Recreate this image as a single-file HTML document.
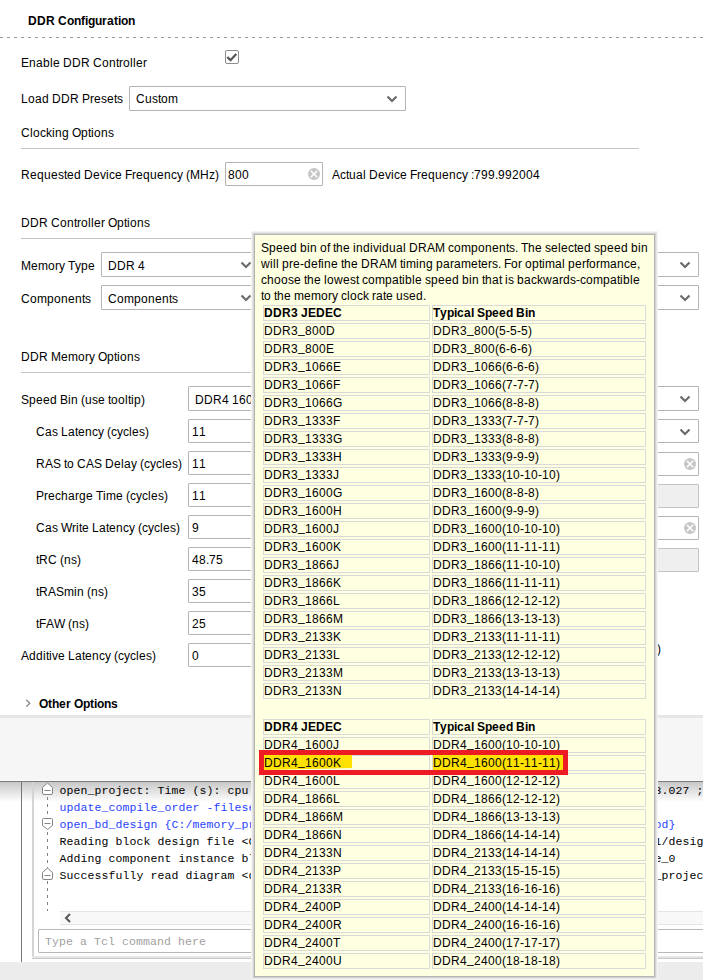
<!DOCTYPE html>
<html><head><meta charset="utf-8"><title>DDR Configuration</title><style>
html,body{margin:0;padding:0}
body{width:703px;height:980px;overflow:hidden;position:relative;background:#fff;font-family:"Liberation Sans",sans-serif;font-size:12px;color:#000;font-kerning:none;font-variant-ligatures:none}
.t{position:absolute;white-space:pre;line-height:14px;font-size:12px}
.t i{font-style:normal;display:inline-block}
.t .u{position:relative;top:-2px}
.w1{width:1px}.w2{width:2px}.w3{width:3px}.w4{width:4px}.w5{width:5px}.w6{width:6px}.w7{width:7px}.w8{width:8px}.w9{width:9px}.w10{width:10px}.w11{width:11px}.w12{width:12px}.w13{width:13px}.w14{width:14px}.w15{width:15px}
.m{position:absolute;white-space:pre;font-family:"Liberation Mono",monospace;font-size:11.5px;letter-spacing:0.1px;line-height:17px}
.bx{position:absolute;box-sizing:border-box;border:1px solid #b4b4b4;background:#fff;border-radius:1px}
.cell{position:absolute;box-sizing:border-box;border:1px solid #d9d9d9}
.hl{position:absolute;height:1px;background:#c4c4c4}
.chev{position:absolute;overflow:visible}
.cb{position:absolute;width:14px;height:14px;box-sizing:border-box;border:1px solid #8c8c8c;border-radius:2px;background:#fff}
#tip{position:absolute;left:254px;top:234px;width:401px;height:743px;box-sizing:border-box;background:#ffffe1;border:1px solid #b4b4b4;box-shadow:0 0 0 1px #d2d2d2,0 0 0 2px #e6e6e6,0 0 0 3px #f4f4f4}
.tt{position:absolute;white-space:pre;line-height:14px;font-size:12px;letter-spacing:0.1px}
</style></head>
<body>
<div class="t" style="left:28px;top:14px;font-weight:bold"><i class="w9">D</i><i class="w9">D</i><i class="w9">R</i><i class="w3"> </i><i class="w9">C</i><i class="w7">o</i><i class="w7">n</i><i class="w4">f</i><i class="w3">i</i><i class="w7">g</i><i class="w7">u</i><i class="w5">r</i><i class="w7">a</i><i class="w4">t</i><i class="w3">i</i><i class="w7">o</i><i class="w7">n</i></div>
<div style="position:absolute;left:0;top:37px;width:703px;height:1px;background:repeating-linear-gradient(90deg,#9a9a9a 0 3px,transparent 3px 7px)"></div>
<div class="t" style="left:21px;top:56px"><i class="w8">E</i><i class="w7">n</i><i class="w7">a</i><i class="w7">b</i><i class="w3">l</i><i class="w7">e</i><i class="w3"> </i><i class="w9">D</i><i class="w9">D</i><i class="w9">R</i><i class="w3"> </i><i class="w9">C</i><i class="w7">o</i><i class="w7">n</i><i class="w3">t</i><i class="w4">r</i><i class="w7">o</i><i class="w3">l</i><i class="w3">l</i><i class="w7">e</i><i class="w4">r</i></div>
<div class="cb" style="left:225px;top:50px"></div>
<svg class="chev" style="left:225px;top:50px" width="14" height="14" viewBox="0 0 14 14"><path d="M2.3 7 L5.5 10.2 L11.3 4" fill="none" stroke="#555" stroke-width="2.3"/></svg>
<div class="t" style="left:21px;top:92px"><i class="w7">L</i><i class="w7">o</i><i class="w7">a</i><i class="w7">d</i><i class="w3"> </i><i class="w9">D</i><i class="w9">D</i><i class="w9">R</i><i class="w3"> </i><i class="w8">P</i><i class="w4">r</i><i class="w7">e</i><i class="w6">s</i><i class="w7">e</i><i class="w3">t</i><i class="w6">s</i></div>
<div class="bx" style="left:129px;top:86px;width:277px;height:25px;"></div>
<div class="t" style="left:136px;top:92px"><i class="w9">C</i><i class="w7">u</i><i class="w6">s</i><i class="w3">t</i><i class="w7">o</i><i class="w10">m</i></div>
<svg class="chev" style="left:386px;top:95px" width="12" height="8" viewBox="0 0 12 8"><path d="M1.5 1.5 L6 6 L10.5 1.5" fill="none" stroke="#6b6b6b" stroke-width="2.2"/></svg>
<div class="t" style="left:21px;top:126px"><i class="w9">C</i><i class="w3">l</i><i class="w7">o</i><i class="w6">c</i><i class="w6">k</i><i class="w3">i</i><i class="w7">n</i><i class="w7">g</i><i class="w3"> </i><i class="w9">O</i><i class="w7">p</i><i class="w3">t</i><i class="w3">i</i><i class="w7">o</i><i class="w7">n</i><i class="w6">s</i></div>
<div class="hl" style="left:21px;top:148px;width:618px"></div>
<div class="t" style="left:21px;top:168px"><i class="w9">R</i><i class="w7">e</i><i class="w7">q</i><i class="w7">u</i><i class="w7">e</i><i class="w6">s</i><i class="w3">t</i><i class="w7">e</i><i class="w7">d</i><i class="w3"> </i><i class="w9">D</i><i class="w7">e</i><i class="w6">v</i><i class="w3">i</i><i class="w6">c</i><i class="w7">e</i><i class="w3"> </i><i class="w7">F</i><i class="w4">r</i><i class="w7">e</i><i class="w7">q</i><i class="w7">u</i><i class="w7">e</i><i class="w7">n</i><i class="w6">c</i><i class="w6">y</i><i class="w3"> </i><i class="w4">(</i><i class="w10">M</i><i class="w9">H</i><i class="w6">z</i><i class="w4">)</i></div>
<div class="bx" style="left:225px;top:162px;width:98px;height:24px;"></div>
<div class="t" style="left:228px;top:168px"><i class="w7">8</i><i class="w7">0</i><i class="w7">0</i></div>
<svg class="chev" style="left:308px;top:168px" width="12" height="12" viewBox="0 0 12 12"><circle cx="6" cy="6" r="6" fill="#c6c6c6"/><path d="M2.8 2.8 L9.2 9.2 M9.2 2.8 L2.8 9.2" stroke="#fff" stroke-width="1.5"/></svg>
<div class="t" style="left:332px;top:168px"><i class="w8">A</i><i class="w6">c</i><i class="w3">t</i><i class="w7">u</i><i class="w7">a</i><i class="w3">l</i><i class="w3"> </i><i class="w9">D</i><i class="w7">e</i><i class="w6">v</i><i class="w3">i</i><i class="w6">c</i><i class="w7">e</i><i class="w3"> </i><i class="w7">F</i><i class="w4">r</i><i class="w7">e</i><i class="w7">q</i><i class="w7">u</i><i class="w7">e</i><i class="w7">n</i><i class="w6">c</i><i class="w6">y</i><i class="w3"> </i><i class="w3">:</i><i class="w7">7</i><i class="w7">9</i><i class="w7">9</i><i class="w3">.</i><i class="w7">9</i><i class="w7">9</i><i class="w7">2</i><i class="w7">0</i><i class="w7">0</i><i class="w7">4</i></div>
<div class="t" style="left:21px;top:216px"><i class="w9">D</i><i class="w9">D</i><i class="w9">R</i><i class="w3"> </i><i class="w9">C</i><i class="w7">o</i><i class="w7">n</i><i class="w3">t</i><i class="w4">r</i><i class="w7">o</i><i class="w3">l</i><i class="w3">l</i><i class="w7">e</i><i class="w4">r</i><i class="w3"> </i><i class="w9">O</i><i class="w7">p</i><i class="w3">t</i><i class="w3">i</i><i class="w7">o</i><i class="w7">n</i><i class="w6">s</i></div>
<div class="hl" style="left:21px;top:238px;width:618px"></div>
<div class="t" style="left:21px;top:259px"><i class="w10">M</i><i class="w7">e</i><i class="w10">m</i><i class="w7">o</i><i class="w4">r</i><i class="w6">y</i><i class="w3"> </i><i class="w7">T</i><i class="w6">y</i><i class="w7">p</i><i class="w7">e</i></div>
<div class="bx" style="left:101px;top:252px;width:598px;height:25px;"></div>
<div class="t" style="left:108px;top:259px"><i class="w9">D</i><i class="w9">D</i><i class="w9">R</i><i class="w3"> </i><i class="w7">4</i></div>
<svg class="chev" style="left:679px;top:261px" width="12" height="8" viewBox="0 0 12 8"><path d="M1.5 1.5 L6 6 L10.5 1.5" fill="none" stroke="#6b6b6b" stroke-width="2.2"/></svg>
<svg class="chev" style="left:240px;top:261px" width="12" height="8" viewBox="0 0 12 8"><path d="M1.5 1.5 L6 6 L10.5 1.5" fill="none" stroke="#6b6b6b" stroke-width="2.2"/></svg>
<div class="t" style="left:21px;top:292px"><i class="w9">C</i><i class="w7">o</i><i class="w10">m</i><i class="w7">p</i><i class="w7">o</i><i class="w7">n</i><i class="w7">e</i><i class="w7">n</i><i class="w3">t</i><i class="w6">s</i></div>
<div class="bx" style="left:101px;top:285px;width:598px;height:25px;"></div>
<div class="t" style="left:108px;top:292px"><i class="w9">C</i><i class="w7">o</i><i class="w10">m</i><i class="w7">p</i><i class="w7">o</i><i class="w7">n</i><i class="w7">e</i><i class="w7">n</i><i class="w3">t</i><i class="w6">s</i></div>
<svg class="chev" style="left:679px;top:294px" width="12" height="8" viewBox="0 0 12 8"><path d="M1.5 1.5 L6 6 L10.5 1.5" fill="none" stroke="#6b6b6b" stroke-width="2.2"/></svg>
<svg class="chev" style="left:240px;top:294px" width="12" height="8" viewBox="0 0 12 8"><path d="M1.5 1.5 L6 6 L10.5 1.5" fill="none" stroke="#6b6b6b" stroke-width="2.2"/></svg>
<div class="t" style="left:21px;top:350px"><i class="w9">D</i><i class="w9">D</i><i class="w9">R</i><i class="w3"> </i><i class="w10">M</i><i class="w7">e</i><i class="w10">m</i><i class="w7">o</i><i class="w4">r</i><i class="w6">y</i><i class="w3"> </i><i class="w9">O</i><i class="w7">p</i><i class="w3">t</i><i class="w3">i</i><i class="w7">o</i><i class="w7">n</i><i class="w6">s</i></div>
<div class="hl" style="left:21px;top:372px;width:618px"></div>
<div class="t" style="left:21px;top:393px"><i class="w8">S</i><i class="w7">p</i><i class="w7">e</i><i class="w7">e</i><i class="w7">d</i><i class="w3"> </i><i class="w8">B</i><i class="w3">i</i><i class="w7">n</i><i class="w3"> </i><i class="w4">(</i><i class="w7">u</i><i class="w6">s</i><i class="w7">e</i><i class="w3"> </i><i class="w3">t</i><i class="w7">o</i><i class="w7">o</i><i class="w3">l</i><i class="w3">t</i><i class="w3">i</i><i class="w7">p</i><i class="w4">)</i></div>
<div class="bx" style="left:188px;top:386px;width:511px;height:25px;"></div>
<div class="t" style="left:195px;top:393px"><i class="w9">D</i><i class="w9">D</i><i class="w9">R</i><i class="w7">4</i><i class="w3"> </i><i class="w7">1</i><i class="w7">6</i><i class="w7">0</i><i class="w7">0</i><i class="w8">K</i></div>
<svg class="chev" style="left:679px;top:395px" width="12" height="8" viewBox="0 0 12 8"><path d="M1.5 1.5 L6 6 L10.5 1.5" fill="none" stroke="#6b6b6b" stroke-width="2.2"/></svg>
<div class="t" style="left:36px;top:425px"><i class="w9">C</i><i class="w7">a</i><i class="w6">s</i><i class="w3"> </i><i class="w7">L</i><i class="w7">a</i><i class="w3">t</i><i class="w7">e</i><i class="w7">n</i><i class="w6">c</i><i class="w6">y</i><i class="w3"> </i><i class="w4">(</i><i class="w6">c</i><i class="w6">y</i><i class="w6">c</i><i class="w3">l</i><i class="w7">e</i><i class="w6">s</i><i class="w4">)</i></div>
<div class="bx" style="left:188px;top:419px;width:511px;height:24px;"></div>
<div class="t" style="left:192px;top:425px"><i class="w7">1</i><i class="w7">1</i></div>
<svg class="chev" style="left:679px;top:428px" width="12" height="8" viewBox="0 0 12 8"><path d="M1.5 1.5 L6 6 L10.5 1.5" fill="none" stroke="#6b6b6b" stroke-width="2.2"/></svg>
<div class="t" style="left:36px;top:457px"><i class="w9">R</i><i class="w8">A</i><i class="w8">S</i><i class="w3"> </i><i class="w3">t</i><i class="w7">o</i><i class="w3"> </i><i class="w9">C</i><i class="w8">A</i><i class="w8">S</i><i class="w3"> </i><i class="w9">D</i><i class="w7">e</i><i class="w3">l</i><i class="w7">a</i><i class="w6">y</i><i class="w3"> </i><i class="w4">(</i><i class="w6">c</i><i class="w6">y</i><i class="w6">c</i><i class="w3">l</i><i class="w7">e</i><i class="w6">s</i><i class="w4">)</i></div>
<div class="bx" style="left:480px;top:452px;width:219px;height:24px;"></div>
<div class="bx" style="left:188px;top:451px;width:213px;height:24px;"></div>
<div class="t" style="left:192px;top:457px"><i class="w7">1</i><i class="w7">1</i></div>
<svg class="chev" style="left:684px;top:458px" width="12" height="12" viewBox="0 0 12 12"><circle cx="6" cy="6" r="6" fill="#c6c6c6"/><path d="M2.8 2.8 L9.2 9.2 M9.2 2.8 L2.8 9.2" stroke="#fff" stroke-width="1.5"/></svg>
<div class="t" style="left:36px;top:489px"><i class="w8">P</i><i class="w4">r</i><i class="w7">e</i><i class="w6">c</i><i class="w7">h</i><i class="w7">a</i><i class="w4">r</i><i class="w7">g</i><i class="w7">e</i><i class="w3"> </i><i class="w7">T</i><i class="w3">i</i><i class="w10">m</i><i class="w7">e</i><i class="w3"> </i><i class="w4">(</i><i class="w6">c</i><i class="w6">y</i><i class="w6">c</i><i class="w3">l</i><i class="w7">e</i><i class="w6">s</i><i class="w4">)</i></div>
<div class="bx" style="left:480px;top:484px;width:219px;height:24px;background:#efefef;border-color:#c4c4c4"></div>
<div class="bx" style="left:188px;top:483px;width:213px;height:24px;"></div>
<div class="t" style="left:192px;top:489px"><i class="w7">1</i><i class="w7">1</i></div>
<div class="t" style="left:36px;top:521px"><i class="w9">C</i><i class="w7">a</i><i class="w6">s</i><i class="w3"> </i><i class="w11">W</i><i class="w4">r</i><i class="w3">i</i><i class="w3">t</i><i class="w7">e</i><i class="w3"> </i><i class="w7">L</i><i class="w7">a</i><i class="w3">t</i><i class="w7">e</i><i class="w7">n</i><i class="w6">c</i><i class="w6">y</i><i class="w3"> </i><i class="w4">(</i><i class="w6">c</i><i class="w6">y</i><i class="w6">c</i><i class="w3">l</i><i class="w7">e</i><i class="w6">s</i><i class="w4">)</i></div>
<div class="bx" style="left:480px;top:516px;width:219px;height:24px;"></div>
<div class="bx" style="left:188px;top:515px;width:213px;height:24px;"></div>
<div class="t" style="left:192px;top:521px"><i class="w7">9</i></div>
<svg class="chev" style="left:684px;top:522px" width="12" height="12" viewBox="0 0 12 12"><circle cx="6" cy="6" r="6" fill="#c6c6c6"/><path d="M2.8 2.8 L9.2 9.2 M9.2 2.8 L2.8 9.2" stroke="#fff" stroke-width="1.5"/></svg>
<div class="t" style="left:36px;top:553px"><i class="w3">t</i><i class="w9">R</i><i class="w9">C</i><i class="w3"> </i><i class="w4">(</i><i class="w7">n</i><i class="w6">s</i><i class="w4">)</i></div>
<div class="bx" style="left:480px;top:548px;width:219px;height:24px;background:#efefef;border-color:#c4c4c4"></div>
<div class="bx" style="left:188px;top:547px;width:213px;height:24px;"></div>
<div class="t" style="left:192px;top:553px"><i class="w7">4</i><i class="w7">8</i><i class="w3">.</i><i class="w7">7</i><i class="w7">5</i></div>
<div class="t" style="left:36px;top:585px"><i class="w3">t</i><i class="w9">R</i><i class="w8">A</i><i class="w8">S</i><i class="w10">m</i><i class="w3">i</i><i class="w7">n</i><i class="w3"> </i><i class="w4">(</i><i class="w7">n</i><i class="w6">s</i><i class="w4">)</i></div>
<div class="bx" style="left:188px;top:579px;width:453px;height:24px;"></div>
<div class="t" style="left:192px;top:585px"><i class="w7">3</i><i class="w7">5</i></div>
<div class="t" style="left:36px;top:617px"><i class="w3">t</i><i class="w7">F</i><i class="w8">A</i><i class="w11">W</i><i class="w3"> </i><i class="w4">(</i><i class="w7">n</i><i class="w6">s</i><i class="w4">)</i></div>
<div class="bx" style="left:188px;top:611px;width:453px;height:24px;"></div>
<div class="t" style="left:192px;top:617px"><i class="w7">2</i><i class="w7">5</i></div>
<div class="t" style="left:21px;top:649px"><i class="w8">A</i><i class="w7">d</i><i class="w7">d</i><i class="w3">i</i><i class="w3">t</i><i class="w3">i</i><i class="w6">v</i><i class="w7">e</i><i class="w3"> </i><i class="w7">L</i><i class="w7">a</i><i class="w3">t</i><i class="w7">e</i><i class="w7">n</i><i class="w6">c</i><i class="w6">y</i><i class="w3"> </i><i class="w4">(</i><i class="w6">c</i><i class="w6">y</i><i class="w6">c</i><i class="w3">l</i><i class="w7">e</i><i class="w6">s</i><i class="w4">)</i></div>
<div class="bx" style="left:188px;top:643px;width:453px;height:24px;"></div>
<div class="t" style="left:192px;top:649px"><i class="w7">0</i></div>
<div class="t" style="left:657px;top:642px"><i class="w4">)</i></div>
<svg class="chev" style="left:24px;top:698px" width="8" height="12" viewBox="0 0 8 12"><path d="M2.3 1.8 L5.8 5.3 L2.3 8.8" fill="none" stroke="#8a8a8a" stroke-width="1.3"/></svg>
<div class="t" style="left:39px;top:697px;font-weight:bold"><i class="w9">O</i><i class="w4">t</i><i class="w7">h</i><i class="w7">e</i><i class="w5">r</i><i class="w3"> </i><i class="w9">O</i><i class="w7">p</i><i class="w4">t</i><i class="w3">i</i><i class="w7">o</i><i class="w7">n</i><i class="w7">s</i></div>
<div style="position:absolute;left:0;top:715px;width:703px;height:65px;background:#f6f6f6;border-top:3px solid #e6e6e6;box-sizing:border-box"></div>
<div style="position:absolute;left:0;top:780px;width:703px;height:1px;background:#fbfbfb"></div>
<div style="position:absolute;left:0;top:781px;width:703px;height:1px;background:#7a7a7a"></div>
<div style="position:absolute;left:0;top:782px;width:703px;height:180px;background:#fff"></div>
<div style="position:absolute;left:0;top:782px;width:703px;height:20px;background:linear-gradient(#c8c8c8,rgba(255,255,255,0))"></div>
<div style="position:absolute;left:21px;top:782px;width:1px;height:180px;background:#777"></div>
<div style="position:absolute;left:32px;top:782px;width:2px;height:176px;background:#d4d4d4"></div>
<div style="position:absolute;left:32px;top:956px;width:671px;height:2px;background:#e6e6e6"></div>
<div style="position:absolute;left:32px;top:958px;width:671px;height:1px;background:#c8c8c8"></div>
<div style="position:absolute;left:60px;top:911px;width:643px;height:14px;background:#f8f8f8;border-top:1px solid #e4e4e4;border-bottom:1px solid #e4e4e4;box-sizing:border-box"></div>
<svg class="chev" style="left:63px;top:912px" width="10" height="12" viewBox="0 0 10 12"><path d="M7 2 L3 6 L7 10" fill="none" stroke="#555" stroke-width="2"/></svg>
<div class="bx" style="left:38px;top:929px;width:666px;height:24px;border-color:#b8b8b8"></div>
<div class="m" style="left:45px;top:933px;color:#a0a0a0">Type a Tcl command here</div>
<div style="position:absolute;left:0;top:962px;width:703px;height:18px;background:#ececec"></div>
<div class="m" style="left:59.5px;top:782px;color:#000">open_project: Time (s): cpu = 00:00:14 ; elapsed = 00:00:07 . Memory (MB): peak = 1003.027 ; gain = 230.832</div>
<div class="m" style="left:59.5px;top:799px;color:#1f3fff">update_compile_order -fileset sources_1</div>
<div class="m" style="left:59.5px;top:816px;color:#1f3fff">open_bd_design {C:/memory_project/memory_project.srcs/sources_1/bd/design_1/design_1.bd}</div>
<div class="m" style="left:59.5px;top:833px;color:#000">Reading block design file &lt;C:/memory_project/memory_project.srcs/sources_1/bd/design_1/design_1.bd&gt;...</div>
<div class="m" style="left:59.5px;top:850px;color:#000">Adding component instance block -- xilinx.com:ip:zynq_ultra_ps_e:3.3 - zynq_ultra_ps_e_0</div>
<div class="m" style="left:59.5px;top:867px;color:#000">Successfully read diagram &lt;design_1&gt; from BD file &lt;C:/Users/admin/Desktop/test/memory_project/memory_project.srcs/sources_1/bd/design_1/design_1.bd&gt;</div>
<div style="position:absolute;left:47px;top:797px;width:1px;height:114px;background:repeating-linear-gradient(180deg,#808080 0 3px,transparent 3px 7px)"></div>
<svg class="chev" style="left:41px;top:782px" width="13" height="14" viewBox="0 0 13 14"><path d="M1.5 5.5 L6.5 1 L11.5 5.5 L11.5 11 Q11.5 12.5 10 12.5 L3 12.5 Q1.5 12.5 1.5 11 Z" fill="#fff" stroke="#858585" stroke-width="1"/><path d="M3.5 8.5 H9.5" stroke="#858585" stroke-width="1"/></svg>
<svg class="chev" style="left:41px;top:817px" width="13" height="14" viewBox="0 0 13 14"><path d="M1.5 2.5 Q1.5 1.5 2.5 1.5 L10.5 1.5 Q11.5 1.5 11.5 2.5 L11.5 8.5 L6.5 12.5 L1.5 8.5 Z" fill="#fff" stroke="#858585" stroke-width="1"/><path d="M3.5 6.5 H9.5" stroke="#858585" stroke-width="1"/></svg>
<svg class="chev" style="left:41px;top:867px" width="13" height="14" viewBox="0 0 13 14"><path d="M1.5 5.5 L6.5 1 L11.5 5.5 L11.5 11 Q11.5 12.5 10 12.5 L3 12.5 Q1.5 12.5 1.5 11 Z" fill="#fff" stroke="#858585" stroke-width="1"/><path d="M3.5 8.5 H9.5" stroke="#858585" stroke-width="1"/></svg>
<div id="tip"></div>
<div class="t" style="left:261px;top:241px"><i class="w8">S</i><i class="w7">p</i><i class="w7">e</i><i class="w7">e</i><i class="w7">d</i><i class="w3"> </i><i class="w7">b</i><i class="w3">i</i><i class="w7">n</i><i class="w3"> </i><i class="w7">o</i><i class="w3">f</i><i class="w3"> </i><i class="w3">t</i><i class="w7">h</i><i class="w7">e</i><i class="w3"> </i><i class="w3">i</i><i class="w7">n</i><i class="w7">d</i><i class="w3">i</i><i class="w6">v</i><i class="w3">i</i><i class="w7">d</i><i class="w7">u</i><i class="w7">a</i><i class="w3">l</i><i class="w3"> </i><i class="w9">D</i><i class="w9">R</i><i class="w8">A</i><i class="w10">M</i><i class="w3"> </i><i class="w6">c</i><i class="w7">o</i><i class="w10">m</i><i class="w7">p</i><i class="w7">o</i><i class="w7">n</i><i class="w7">e</i><i class="w7">n</i><i class="w3">t</i><i class="w6">s</i><i class="w3">.</i><i class="w3"> </i><i class="w7">T</i><i class="w7">h</i><i class="w7">e</i><i class="w3"> </i><i class="w6">s</i><i class="w7">e</i><i class="w3">l</i><i class="w7">e</i><i class="w6">c</i><i class="w3">t</i><i class="w7">e</i><i class="w7">d</i><i class="w3"> </i><i class="w6">s</i><i class="w7">p</i><i class="w7">e</i><i class="w7">e</i><i class="w7">d</i><i class="w3"> </i><i class="w7">b</i><i class="w3">i</i><i class="w7">n</i></div>
<div class="t" style="left:261px;top:257px"><i class="w9">w</i><i class="w3">i</i><i class="w3">l</i><i class="w3">l</i><i class="w3"> </i><i class="w7">p</i><i class="w4">r</i><i class="w7">e</i><i class="w4">-</i><i class="w7">d</i><i class="w7">e</i><i class="w3">f</i><i class="w3">i</i><i class="w7">n</i><i class="w7">e</i><i class="w3"> </i><i class="w3">t</i><i class="w7">h</i><i class="w7">e</i><i class="w3"> </i><i class="w9">D</i><i class="w9">R</i><i class="w8">A</i><i class="w10">M</i><i class="w3"> </i><i class="w3">t</i><i class="w3">i</i><i class="w10">m</i><i class="w3">i</i><i class="w7">n</i><i class="w7">g</i><i class="w3"> </i><i class="w7">p</i><i class="w7">a</i><i class="w4">r</i><i class="w7">a</i><i class="w10">m</i><i class="w7">e</i><i class="w3">t</i><i class="w7">e</i><i class="w4">r</i><i class="w6">s</i><i class="w3">.</i><i class="w3"> </i><i class="w7">F</i><i class="w7">o</i><i class="w4">r</i><i class="w3"> </i><i class="w7">o</i><i class="w7">p</i><i class="w3">t</i><i class="w3">i</i><i class="w10">m</i><i class="w7">a</i><i class="w3">l</i><i class="w3"> </i><i class="w7">p</i><i class="w7">e</i><i class="w4">r</i><i class="w3">f</i><i class="w7">o</i><i class="w4">r</i><i class="w10">m</i><i class="w7">a</i><i class="w7">n</i><i class="w6">c</i><i class="w7">e</i><i class="w3">,</i></div>
<div class="t" style="left:261px;top:273px"><i class="w6">c</i><i class="w7">h</i><i class="w7">o</i><i class="w7">o</i><i class="w6">s</i><i class="w7">e</i><i class="w3"> </i><i class="w3">t</i><i class="w7">h</i><i class="w7">e</i><i class="w3"> </i><i class="w3">l</i><i class="w7">o</i><i class="w9">w</i><i class="w7">e</i><i class="w6">s</i><i class="w3">t</i><i class="w3"> </i><i class="w6">c</i><i class="w7">o</i><i class="w10">m</i><i class="w7">p</i><i class="w7">a</i><i class="w3">t</i><i class="w3">i</i><i class="w7">b</i><i class="w3">l</i><i class="w7">e</i><i class="w3"> </i><i class="w6">s</i><i class="w7">p</i><i class="w7">e</i><i class="w7">e</i><i class="w7">d</i><i class="w3"> </i><i class="w7">b</i><i class="w3">i</i><i class="w7">n</i><i class="w3"> </i><i class="w3">t</i><i class="w7">h</i><i class="w7">a</i><i class="w3">t</i><i class="w3"> </i><i class="w3">i</i><i class="w6">s</i><i class="w3"> </i><i class="w7">b</i><i class="w7">a</i><i class="w6">c</i><i class="w6">k</i><i class="w9">w</i><i class="w7">a</i><i class="w4">r</i><i class="w7">d</i><i class="w6">s</i><i class="w4">-</i><i class="w6">c</i><i class="w7">o</i><i class="w10">m</i><i class="w7">p</i><i class="w7">a</i><i class="w3">t</i><i class="w3">i</i><i class="w7">b</i><i class="w3">l</i><i class="w7">e</i></div>
<div class="t" style="left:261px;top:289px"><i class="w3">t</i><i class="w7">o</i><i class="w3"> </i><i class="w3">t</i><i class="w7">h</i><i class="w7">e</i><i class="w3"> </i><i class="w10">m</i><i class="w7">e</i><i class="w10">m</i><i class="w7">o</i><i class="w4">r</i><i class="w6">y</i><i class="w3"> </i><i class="w6">c</i><i class="w3">l</i><i class="w7">o</i><i class="w6">c</i><i class="w6">k</i><i class="w3"> </i><i class="w4">r</i><i class="w7">a</i><i class="w3">t</i><i class="w7">e</i><i class="w3"> </i><i class="w7">u</i><i class="w6">s</i><i class="w7">e</i><i class="w7">d</i><i class="w3">.</i></div>
<div class="cell" style="left:263px;top:305px;width:167px;height:16px;"></div>
<div class="cell" style="left:432px;top:305px;width:214px;height:16px;"></div>
<div class="t" style="left:264px;top:306px;font-weight:bold"><i class="w9">D</i><i class="w9">D</i><i class="w9">R</i><i class="w7">3</i><i class="w3"> </i><i class="w7">J</i><i class="w8">E</i><i class="w9">D</i><i class="w8">E</i><i class="w9">C</i></div>
<div class="t" style="left:433px;top:306px;font-weight:bold"><i class="w7">T</i><i class="w7">y</i><i class="w7">p</i><i class="w3">i</i><i class="w7">c</i><i class="w7">a</i><i class="w3">l</i><i class="w3"> </i><i class="w8">S</i><i class="w7">p</i><i class="w7">e</i><i class="w7">e</i><i class="w7">d</i><i class="w3"> </i><i class="w9">B</i><i class="w3">i</i><i class="w7">n</i></div>
<div class="cell" style="left:263px;top:323px;width:167px;height:16px;"></div>
<div class="cell" style="left:432px;top:323px;width:214px;height:16px;"></div>
<div class="t" style="left:264px;top:324px"><i class="w9">D</i><i class="w9">D</i><i class="w9">R</i><i class="w7">3</i><i class="w7 u">_</i><i class="w7">8</i><i class="w7">0</i><i class="w7">0</i><i class="w9">D</i></div>
<div class="t" style="left:433px;top:324px"><i class="w9">D</i><i class="w9">D</i><i class="w9">R</i><i class="w7">3</i><i class="w7 u">_</i><i class="w7">8</i><i class="w7">0</i><i class="w7">0</i><i class="w4">(</i><i class="w7">5</i><i class="w4">-</i><i class="w7">5</i><i class="w4">-</i><i class="w7">5</i><i class="w4">)</i></div>
<div class="cell" style="left:263px;top:341px;width:167px;height:16px;"></div>
<div class="cell" style="left:432px;top:341px;width:214px;height:16px;"></div>
<div class="t" style="left:264px;top:342px"><i class="w9">D</i><i class="w9">D</i><i class="w9">R</i><i class="w7">3</i><i class="w7 u">_</i><i class="w7">8</i><i class="w7">0</i><i class="w7">0</i><i class="w8">E</i></div>
<div class="t" style="left:433px;top:342px"><i class="w9">D</i><i class="w9">D</i><i class="w9">R</i><i class="w7">3</i><i class="w7 u">_</i><i class="w7">8</i><i class="w7">0</i><i class="w7">0</i><i class="w4">(</i><i class="w7">6</i><i class="w4">-</i><i class="w7">6</i><i class="w4">-</i><i class="w7">6</i><i class="w4">)</i></div>
<div class="cell" style="left:263px;top:359px;width:167px;height:16px;"></div>
<div class="cell" style="left:432px;top:359px;width:214px;height:16px;"></div>
<div class="t" style="left:264px;top:360px"><i class="w9">D</i><i class="w9">D</i><i class="w9">R</i><i class="w7">3</i><i class="w7 u">_</i><i class="w7">1</i><i class="w7">0</i><i class="w7">6</i><i class="w7">6</i><i class="w8">E</i></div>
<div class="t" style="left:433px;top:360px"><i class="w9">D</i><i class="w9">D</i><i class="w9">R</i><i class="w7">3</i><i class="w7 u">_</i><i class="w7">1</i><i class="w7">0</i><i class="w7">6</i><i class="w7">6</i><i class="w4">(</i><i class="w7">6</i><i class="w4">-</i><i class="w7">6</i><i class="w4">-</i><i class="w7">6</i><i class="w4">)</i></div>
<div class="cell" style="left:263px;top:377px;width:167px;height:16px;"></div>
<div class="cell" style="left:432px;top:377px;width:214px;height:16px;"></div>
<div class="t" style="left:264px;top:378px"><i class="w9">D</i><i class="w9">D</i><i class="w9">R</i><i class="w7">3</i><i class="w7 u">_</i><i class="w7">1</i><i class="w7">0</i><i class="w7">6</i><i class="w7">6</i><i class="w7">F</i></div>
<div class="t" style="left:433px;top:378px"><i class="w9">D</i><i class="w9">D</i><i class="w9">R</i><i class="w7">3</i><i class="w7 u">_</i><i class="w7">1</i><i class="w7">0</i><i class="w7">6</i><i class="w7">6</i><i class="w4">(</i><i class="w7">7</i><i class="w4">-</i><i class="w7">7</i><i class="w4">-</i><i class="w7">7</i><i class="w4">)</i></div>
<div class="cell" style="left:263px;top:395px;width:167px;height:16px;"></div>
<div class="cell" style="left:432px;top:395px;width:214px;height:16px;"></div>
<div class="t" style="left:264px;top:396px"><i class="w9">D</i><i class="w9">D</i><i class="w9">R</i><i class="w7">3</i><i class="w7 u">_</i><i class="w7">1</i><i class="w7">0</i><i class="w7">6</i><i class="w7">6</i><i class="w9">G</i></div>
<div class="t" style="left:433px;top:396px"><i class="w9">D</i><i class="w9">D</i><i class="w9">R</i><i class="w7">3</i><i class="w7 u">_</i><i class="w7">1</i><i class="w7">0</i><i class="w7">6</i><i class="w7">6</i><i class="w4">(</i><i class="w7">8</i><i class="w4">-</i><i class="w7">8</i><i class="w4">-</i><i class="w7">8</i><i class="w4">)</i></div>
<div class="cell" style="left:263px;top:413px;width:167px;height:16px;"></div>
<div class="cell" style="left:432px;top:413px;width:214px;height:16px;"></div>
<div class="t" style="left:264px;top:414px"><i class="w9">D</i><i class="w9">D</i><i class="w9">R</i><i class="w7">3</i><i class="w7 u">_</i><i class="w7">1</i><i class="w7">3</i><i class="w7">3</i><i class="w7">3</i><i class="w7">F</i></div>
<div class="t" style="left:433px;top:414px"><i class="w9">D</i><i class="w9">D</i><i class="w9">R</i><i class="w7">3</i><i class="w7 u">_</i><i class="w7">1</i><i class="w7">3</i><i class="w7">3</i><i class="w7">3</i><i class="w4">(</i><i class="w7">7</i><i class="w4">-</i><i class="w7">7</i><i class="w4">-</i><i class="w7">7</i><i class="w4">)</i></div>
<div class="cell" style="left:263px;top:431px;width:167px;height:16px;"></div>
<div class="cell" style="left:432px;top:431px;width:214px;height:16px;"></div>
<div class="t" style="left:264px;top:432px"><i class="w9">D</i><i class="w9">D</i><i class="w9">R</i><i class="w7">3</i><i class="w7 u">_</i><i class="w7">1</i><i class="w7">3</i><i class="w7">3</i><i class="w7">3</i><i class="w9">G</i></div>
<div class="t" style="left:433px;top:432px"><i class="w9">D</i><i class="w9">D</i><i class="w9">R</i><i class="w7">3</i><i class="w7 u">_</i><i class="w7">1</i><i class="w7">3</i><i class="w7">3</i><i class="w7">3</i><i class="w4">(</i><i class="w7">8</i><i class="w4">-</i><i class="w7">8</i><i class="w4">-</i><i class="w7">8</i><i class="w4">)</i></div>
<div class="cell" style="left:263px;top:449px;width:167px;height:16px;"></div>
<div class="cell" style="left:432px;top:449px;width:214px;height:16px;"></div>
<div class="t" style="left:264px;top:450px"><i class="w9">D</i><i class="w9">D</i><i class="w9">R</i><i class="w7">3</i><i class="w7 u">_</i><i class="w7">1</i><i class="w7">3</i><i class="w7">3</i><i class="w7">3</i><i class="w9">H</i></div>
<div class="t" style="left:433px;top:450px"><i class="w9">D</i><i class="w9">D</i><i class="w9">R</i><i class="w7">3</i><i class="w7 u">_</i><i class="w7">1</i><i class="w7">3</i><i class="w7">3</i><i class="w7">3</i><i class="w4">(</i><i class="w7">9</i><i class="w4">-</i><i class="w7">9</i><i class="w4">-</i><i class="w7">9</i><i class="w4">)</i></div>
<div class="cell" style="left:263px;top:467px;width:167px;height:16px;"></div>
<div class="cell" style="left:432px;top:467px;width:214px;height:16px;"></div>
<div class="t" style="left:264px;top:468px"><i class="w9">D</i><i class="w9">D</i><i class="w9">R</i><i class="w7">3</i><i class="w7 u">_</i><i class="w7">1</i><i class="w7">3</i><i class="w7">3</i><i class="w7">3</i><i class="w6">J</i></div>
<div class="t" style="left:433px;top:468px"><i class="w9">D</i><i class="w9">D</i><i class="w9">R</i><i class="w7">3</i><i class="w7 u">_</i><i class="w7">1</i><i class="w7">3</i><i class="w7">3</i><i class="w7">3</i><i class="w4">(</i><i class="w7">1</i><i class="w7">0</i><i class="w4">-</i><i class="w7">1</i><i class="w7">0</i><i class="w4">-</i><i class="w7">1</i><i class="w7">0</i><i class="w4">)</i></div>
<div class="cell" style="left:263px;top:485px;width:167px;height:16px;"></div>
<div class="cell" style="left:432px;top:485px;width:214px;height:16px;"></div>
<div class="t" style="left:264px;top:486px"><i class="w9">D</i><i class="w9">D</i><i class="w9">R</i><i class="w7">3</i><i class="w7 u">_</i><i class="w7">1</i><i class="w7">6</i><i class="w7">0</i><i class="w7">0</i><i class="w9">G</i></div>
<div class="t" style="left:433px;top:486px"><i class="w9">D</i><i class="w9">D</i><i class="w9">R</i><i class="w7">3</i><i class="w7 u">_</i><i class="w7">1</i><i class="w7">6</i><i class="w7">0</i><i class="w7">0</i><i class="w4">(</i><i class="w7">8</i><i class="w4">-</i><i class="w7">8</i><i class="w4">-</i><i class="w7">8</i><i class="w4">)</i></div>
<div class="cell" style="left:263px;top:503px;width:167px;height:16px;"></div>
<div class="cell" style="left:432px;top:503px;width:214px;height:16px;"></div>
<div class="t" style="left:264px;top:504px"><i class="w9">D</i><i class="w9">D</i><i class="w9">R</i><i class="w7">3</i><i class="w7 u">_</i><i class="w7">1</i><i class="w7">6</i><i class="w7">0</i><i class="w7">0</i><i class="w9">H</i></div>
<div class="t" style="left:433px;top:504px"><i class="w9">D</i><i class="w9">D</i><i class="w9">R</i><i class="w7">3</i><i class="w7 u">_</i><i class="w7">1</i><i class="w7">6</i><i class="w7">0</i><i class="w7">0</i><i class="w4">(</i><i class="w7">9</i><i class="w4">-</i><i class="w7">9</i><i class="w4">-</i><i class="w7">9</i><i class="w4">)</i></div>
<div class="cell" style="left:263px;top:521px;width:167px;height:16px;"></div>
<div class="cell" style="left:432px;top:521px;width:214px;height:16px;"></div>
<div class="t" style="left:264px;top:522px"><i class="w9">D</i><i class="w9">D</i><i class="w9">R</i><i class="w7">3</i><i class="w7 u">_</i><i class="w7">1</i><i class="w7">6</i><i class="w7">0</i><i class="w7">0</i><i class="w6">J</i></div>
<div class="t" style="left:433px;top:522px"><i class="w9">D</i><i class="w9">D</i><i class="w9">R</i><i class="w7">3</i><i class="w7 u">_</i><i class="w7">1</i><i class="w7">6</i><i class="w7">0</i><i class="w7">0</i><i class="w4">(</i><i class="w7">1</i><i class="w7">0</i><i class="w4">-</i><i class="w7">1</i><i class="w7">0</i><i class="w4">-</i><i class="w7">1</i><i class="w7">0</i><i class="w4">)</i></div>
<div class="cell" style="left:263px;top:539px;width:167px;height:16px;"></div>
<div class="cell" style="left:432px;top:539px;width:214px;height:16px;"></div>
<div class="t" style="left:264px;top:540px"><i class="w9">D</i><i class="w9">D</i><i class="w9">R</i><i class="w7">3</i><i class="w7 u">_</i><i class="w7">1</i><i class="w7">6</i><i class="w7">0</i><i class="w7">0</i><i class="w8">K</i></div>
<div class="t" style="left:433px;top:540px"><i class="w9">D</i><i class="w9">D</i><i class="w9">R</i><i class="w7">3</i><i class="w7 u">_</i><i class="w7">1</i><i class="w7">6</i><i class="w7">0</i><i class="w7">0</i><i class="w4">(</i><i class="w7">1</i><i class="w7">1</i><i class="w4">-</i><i class="w7">1</i><i class="w7">1</i><i class="w4">-</i><i class="w7">1</i><i class="w7">1</i><i class="w4">)</i></div>
<div class="cell" style="left:263px;top:557px;width:167px;height:16px;"></div>
<div class="cell" style="left:432px;top:557px;width:214px;height:16px;"></div>
<div class="t" style="left:264px;top:558px"><i class="w9">D</i><i class="w9">D</i><i class="w9">R</i><i class="w7">3</i><i class="w7 u">_</i><i class="w7">1</i><i class="w7">8</i><i class="w7">6</i><i class="w7">6</i><i class="w6">J</i></div>
<div class="t" style="left:433px;top:558px"><i class="w9">D</i><i class="w9">D</i><i class="w9">R</i><i class="w7">3</i><i class="w7 u">_</i><i class="w7">1</i><i class="w7">8</i><i class="w7">6</i><i class="w7">6</i><i class="w4">(</i><i class="w7">1</i><i class="w7">1</i><i class="w4">-</i><i class="w7">1</i><i class="w7">0</i><i class="w4">-</i><i class="w7">1</i><i class="w7">0</i><i class="w4">)</i></div>
<div class="cell" style="left:263px;top:575px;width:167px;height:16px;"></div>
<div class="cell" style="left:432px;top:575px;width:214px;height:16px;"></div>
<div class="t" style="left:264px;top:576px"><i class="w9">D</i><i class="w9">D</i><i class="w9">R</i><i class="w7">3</i><i class="w7 u">_</i><i class="w7">1</i><i class="w7">8</i><i class="w7">6</i><i class="w7">6</i><i class="w8">K</i></div>
<div class="t" style="left:433px;top:576px"><i class="w9">D</i><i class="w9">D</i><i class="w9">R</i><i class="w7">3</i><i class="w7 u">_</i><i class="w7">1</i><i class="w7">8</i><i class="w7">6</i><i class="w7">6</i><i class="w4">(</i><i class="w7">1</i><i class="w7">1</i><i class="w4">-</i><i class="w7">1</i><i class="w7">1</i><i class="w4">-</i><i class="w7">1</i><i class="w7">1</i><i class="w4">)</i></div>
<div class="cell" style="left:263px;top:593px;width:167px;height:16px;"></div>
<div class="cell" style="left:432px;top:593px;width:214px;height:16px;"></div>
<div class="t" style="left:264px;top:594px"><i class="w9">D</i><i class="w9">D</i><i class="w9">R</i><i class="w7">3</i><i class="w7 u">_</i><i class="w7">1</i><i class="w7">8</i><i class="w7">6</i><i class="w7">6</i><i class="w7">L</i></div>
<div class="t" style="left:433px;top:594px"><i class="w9">D</i><i class="w9">D</i><i class="w9">R</i><i class="w7">3</i><i class="w7 u">_</i><i class="w7">1</i><i class="w7">8</i><i class="w7">6</i><i class="w7">6</i><i class="w4">(</i><i class="w7">1</i><i class="w7">2</i><i class="w4">-</i><i class="w7">1</i><i class="w7">2</i><i class="w4">-</i><i class="w7">1</i><i class="w7">2</i><i class="w4">)</i></div>
<div class="cell" style="left:263px;top:611px;width:167px;height:16px;"></div>
<div class="cell" style="left:432px;top:611px;width:214px;height:16px;"></div>
<div class="t" style="left:264px;top:612px"><i class="w9">D</i><i class="w9">D</i><i class="w9">R</i><i class="w7">3</i><i class="w7 u">_</i><i class="w7">1</i><i class="w7">8</i><i class="w7">6</i><i class="w7">6</i><i class="w10">M</i></div>
<div class="t" style="left:433px;top:612px"><i class="w9">D</i><i class="w9">D</i><i class="w9">R</i><i class="w7">3</i><i class="w7 u">_</i><i class="w7">1</i><i class="w7">8</i><i class="w7">6</i><i class="w7">6</i><i class="w4">(</i><i class="w7">1</i><i class="w7">3</i><i class="w4">-</i><i class="w7">1</i><i class="w7">3</i><i class="w4">-</i><i class="w7">1</i><i class="w7">3</i><i class="w4">)</i></div>
<div class="cell" style="left:263px;top:629px;width:167px;height:16px;"></div>
<div class="cell" style="left:432px;top:629px;width:214px;height:16px;"></div>
<div class="t" style="left:264px;top:630px"><i class="w9">D</i><i class="w9">D</i><i class="w9">R</i><i class="w7">3</i><i class="w7 u">_</i><i class="w7">2</i><i class="w7">1</i><i class="w7">3</i><i class="w7">3</i><i class="w8">K</i></div>
<div class="t" style="left:433px;top:630px"><i class="w9">D</i><i class="w9">D</i><i class="w9">R</i><i class="w7">3</i><i class="w7 u">_</i><i class="w7">2</i><i class="w7">1</i><i class="w7">3</i><i class="w7">3</i><i class="w4">(</i><i class="w7">1</i><i class="w7">1</i><i class="w4">-</i><i class="w7">1</i><i class="w7">1</i><i class="w4">-</i><i class="w7">1</i><i class="w7">1</i><i class="w4">)</i></div>
<div class="cell" style="left:263px;top:647px;width:167px;height:16px;"></div>
<div class="cell" style="left:432px;top:647px;width:214px;height:16px;"></div>
<div class="t" style="left:264px;top:648px"><i class="w9">D</i><i class="w9">D</i><i class="w9">R</i><i class="w7">3</i><i class="w7 u">_</i><i class="w7">2</i><i class="w7">1</i><i class="w7">3</i><i class="w7">3</i><i class="w7">L</i></div>
<div class="t" style="left:433px;top:648px"><i class="w9">D</i><i class="w9">D</i><i class="w9">R</i><i class="w7">3</i><i class="w7 u">_</i><i class="w7">2</i><i class="w7">1</i><i class="w7">3</i><i class="w7">3</i><i class="w4">(</i><i class="w7">1</i><i class="w7">2</i><i class="w4">-</i><i class="w7">1</i><i class="w7">2</i><i class="w4">-</i><i class="w7">1</i><i class="w7">2</i><i class="w4">)</i></div>
<div class="cell" style="left:263px;top:665px;width:167px;height:16px;"></div>
<div class="cell" style="left:432px;top:665px;width:214px;height:16px;"></div>
<div class="t" style="left:264px;top:666px"><i class="w9">D</i><i class="w9">D</i><i class="w9">R</i><i class="w7">3</i><i class="w7 u">_</i><i class="w7">2</i><i class="w7">1</i><i class="w7">3</i><i class="w7">3</i><i class="w10">M</i></div>
<div class="t" style="left:433px;top:666px"><i class="w9">D</i><i class="w9">D</i><i class="w9">R</i><i class="w7">3</i><i class="w7 u">_</i><i class="w7">2</i><i class="w7">1</i><i class="w7">3</i><i class="w7">3</i><i class="w4">(</i><i class="w7">1</i><i class="w7">3</i><i class="w4">-</i><i class="w7">1</i><i class="w7">3</i><i class="w4">-</i><i class="w7">1</i><i class="w7">3</i><i class="w4">)</i></div>
<div class="cell" style="left:263px;top:683px;width:167px;height:16px;"></div>
<div class="cell" style="left:432px;top:683px;width:214px;height:16px;"></div>
<div class="t" style="left:264px;top:684px"><i class="w9">D</i><i class="w9">D</i><i class="w9">R</i><i class="w7">3</i><i class="w7 u">_</i><i class="w7">2</i><i class="w7">1</i><i class="w7">3</i><i class="w7">3</i><i class="w9">N</i></div>
<div class="t" style="left:433px;top:684px"><i class="w9">D</i><i class="w9">D</i><i class="w9">R</i><i class="w7">3</i><i class="w7 u">_</i><i class="w7">2</i><i class="w7">1</i><i class="w7">3</i><i class="w7">3</i><i class="w4">(</i><i class="w7">1</i><i class="w7">4</i><i class="w4">-</i><i class="w7">1</i><i class="w7">4</i><i class="w4">-</i><i class="w7">1</i><i class="w7">4</i><i class="w4">)</i></div>
<div class="cell" style="left:263px;top:719px;width:167px;height:16px;"></div>
<div class="cell" style="left:432px;top:719px;width:214px;height:16px;"></div>
<div class="t" style="left:264px;top:720px;font-weight:bold"><i class="w9">D</i><i class="w9">D</i><i class="w9">R</i><i class="w7">4</i><i class="w3"> </i><i class="w7">J</i><i class="w8">E</i><i class="w9">D</i><i class="w8">E</i><i class="w9">C</i></div>
<div class="t" style="left:433px;top:720px;font-weight:bold"><i class="w7">T</i><i class="w7">y</i><i class="w7">p</i><i class="w3">i</i><i class="w7">c</i><i class="w7">a</i><i class="w3">l</i><i class="w3"> </i><i class="w8">S</i><i class="w7">p</i><i class="w7">e</i><i class="w7">e</i><i class="w7">d</i><i class="w3"> </i><i class="w9">B</i><i class="w3">i</i><i class="w7">n</i></div>
<div class="cell" style="left:263px;top:737px;width:167px;height:16px;"></div>
<div class="cell" style="left:432px;top:737px;width:214px;height:16px;"></div>
<div class="t" style="left:264px;top:738px"><i class="w9">D</i><i class="w9">D</i><i class="w9">R</i><i class="w7">4</i><i class="w7 u">_</i><i class="w7">1</i><i class="w7">6</i><i class="w7">0</i><i class="w7">0</i><i class="w6">J</i></div>
<div class="t" style="left:433px;top:738px"><i class="w9">D</i><i class="w9">D</i><i class="w9">R</i><i class="w7">4</i><i class="w7 u">_</i><i class="w7">1</i><i class="w7">6</i><i class="w7">0</i><i class="w7">0</i><i class="w4">(</i><i class="w7">1</i><i class="w7">0</i><i class="w4">-</i><i class="w7">1</i><i class="w7">0</i><i class="w4">-</i><i class="w7">1</i><i class="w7">0</i><i class="w4">)</i></div>
<div class="cell" style="left:263px;top:755px;width:167px;height:16px;"></div>
<div class="cell" style="left:432px;top:755px;width:214px;height:16px;"></div>
<div class="t" style="left:264px;top:756px"><i class="w9">D</i><i class="w9">D</i><i class="w9">R</i><i class="w7">4</i><i class="w7 u">_</i><i class="w7">1</i><i class="w7">6</i><i class="w7">0</i><i class="w7">0</i><i class="w8">K</i></div>
<div class="t" style="left:433px;top:756px"><i class="w9">D</i><i class="w9">D</i><i class="w9">R</i><i class="w7">4</i><i class="w7 u">_</i><i class="w7">1</i><i class="w7">6</i><i class="w7">0</i><i class="w7">0</i><i class="w4">(</i><i class="w7">1</i><i class="w7">1</i><i class="w4">-</i><i class="w7">1</i><i class="w7">1</i><i class="w4">-</i><i class="w7">1</i><i class="w7">1</i><i class="w4">)</i></div>
<div class="cell" style="left:263px;top:773px;width:167px;height:16px;"></div>
<div class="cell" style="left:432px;top:773px;width:214px;height:16px;"></div>
<div class="t" style="left:264px;top:774px"><i class="w9">D</i><i class="w9">D</i><i class="w9">R</i><i class="w7">4</i><i class="w7 u">_</i><i class="w7">1</i><i class="w7">6</i><i class="w7">0</i><i class="w7">0</i><i class="w7">L</i></div>
<div class="t" style="left:433px;top:774px"><i class="w9">D</i><i class="w9">D</i><i class="w9">R</i><i class="w7">4</i><i class="w7 u">_</i><i class="w7">1</i><i class="w7">6</i><i class="w7">0</i><i class="w7">0</i><i class="w4">(</i><i class="w7">1</i><i class="w7">2</i><i class="w4">-</i><i class="w7">1</i><i class="w7">2</i><i class="w4">-</i><i class="w7">1</i><i class="w7">2</i><i class="w4">)</i></div>
<div class="cell" style="left:263px;top:791px;width:167px;height:16px;"></div>
<div class="cell" style="left:432px;top:791px;width:214px;height:16px;"></div>
<div class="t" style="left:264px;top:792px"><i class="w9">D</i><i class="w9">D</i><i class="w9">R</i><i class="w7">4</i><i class="w7 u">_</i><i class="w7">1</i><i class="w7">8</i><i class="w7">6</i><i class="w7">6</i><i class="w7">L</i></div>
<div class="t" style="left:433px;top:792px"><i class="w9">D</i><i class="w9">D</i><i class="w9">R</i><i class="w7">4</i><i class="w7 u">_</i><i class="w7">1</i><i class="w7">8</i><i class="w7">6</i><i class="w7">6</i><i class="w4">(</i><i class="w7">1</i><i class="w7">2</i><i class="w4">-</i><i class="w7">1</i><i class="w7">2</i><i class="w4">-</i><i class="w7">1</i><i class="w7">2</i><i class="w4">)</i></div>
<div class="cell" style="left:263px;top:809px;width:167px;height:16px;"></div>
<div class="cell" style="left:432px;top:809px;width:214px;height:16px;"></div>
<div class="t" style="left:264px;top:810px"><i class="w9">D</i><i class="w9">D</i><i class="w9">R</i><i class="w7">4</i><i class="w7 u">_</i><i class="w7">1</i><i class="w7">8</i><i class="w7">6</i><i class="w7">6</i><i class="w10">M</i></div>
<div class="t" style="left:433px;top:810px"><i class="w9">D</i><i class="w9">D</i><i class="w9">R</i><i class="w7">4</i><i class="w7 u">_</i><i class="w7">1</i><i class="w7">8</i><i class="w7">6</i><i class="w7">6</i><i class="w4">(</i><i class="w7">1</i><i class="w7">3</i><i class="w4">-</i><i class="w7">1</i><i class="w7">3</i><i class="w4">-</i><i class="w7">1</i><i class="w7">3</i><i class="w4">)</i></div>
<div class="cell" style="left:263px;top:827px;width:167px;height:16px;"></div>
<div class="cell" style="left:432px;top:827px;width:214px;height:16px;"></div>
<div class="t" style="left:264px;top:828px"><i class="w9">D</i><i class="w9">D</i><i class="w9">R</i><i class="w7">4</i><i class="w7 u">_</i><i class="w7">1</i><i class="w7">8</i><i class="w7">6</i><i class="w7">6</i><i class="w9">N</i></div>
<div class="t" style="left:433px;top:828px"><i class="w9">D</i><i class="w9">D</i><i class="w9">R</i><i class="w7">4</i><i class="w7 u">_</i><i class="w7">1</i><i class="w7">8</i><i class="w7">6</i><i class="w7">6</i><i class="w4">(</i><i class="w7">1</i><i class="w7">4</i><i class="w4">-</i><i class="w7">1</i><i class="w7">4</i><i class="w4">-</i><i class="w7">1</i><i class="w7">4</i><i class="w4">)</i></div>
<div class="cell" style="left:263px;top:845px;width:167px;height:16px;"></div>
<div class="cell" style="left:432px;top:845px;width:214px;height:16px;"></div>
<div class="t" style="left:264px;top:846px"><i class="w9">D</i><i class="w9">D</i><i class="w9">R</i><i class="w7">4</i><i class="w7 u">_</i><i class="w7">2</i><i class="w7">1</i><i class="w7">3</i><i class="w7">3</i><i class="w9">N</i></div>
<div class="t" style="left:433px;top:846px"><i class="w9">D</i><i class="w9">D</i><i class="w9">R</i><i class="w7">4</i><i class="w7 u">_</i><i class="w7">2</i><i class="w7">1</i><i class="w7">3</i><i class="w7">3</i><i class="w4">(</i><i class="w7">1</i><i class="w7">4</i><i class="w4">-</i><i class="w7">1</i><i class="w7">4</i><i class="w4">-</i><i class="w7">1</i><i class="w7">4</i><i class="w4">)</i></div>
<div class="cell" style="left:263px;top:863px;width:167px;height:16px;"></div>
<div class="cell" style="left:432px;top:863px;width:214px;height:16px;"></div>
<div class="t" style="left:264px;top:864px"><i class="w9">D</i><i class="w9">D</i><i class="w9">R</i><i class="w7">4</i><i class="w7 u">_</i><i class="w7">2</i><i class="w7">1</i><i class="w7">3</i><i class="w7">3</i><i class="w8">P</i></div>
<div class="t" style="left:433px;top:864px"><i class="w9">D</i><i class="w9">D</i><i class="w9">R</i><i class="w7">4</i><i class="w7 u">_</i><i class="w7">2</i><i class="w7">1</i><i class="w7">3</i><i class="w7">3</i><i class="w4">(</i><i class="w7">1</i><i class="w7">5</i><i class="w4">-</i><i class="w7">1</i><i class="w7">5</i><i class="w4">-</i><i class="w7">1</i><i class="w7">5</i><i class="w4">)</i></div>
<div class="cell" style="left:263px;top:881px;width:167px;height:16px;"></div>
<div class="cell" style="left:432px;top:881px;width:214px;height:16px;"></div>
<div class="t" style="left:264px;top:882px"><i class="w9">D</i><i class="w9">D</i><i class="w9">R</i><i class="w7">4</i><i class="w7 u">_</i><i class="w7">2</i><i class="w7">1</i><i class="w7">3</i><i class="w7">3</i><i class="w9">R</i></div>
<div class="t" style="left:433px;top:882px"><i class="w9">D</i><i class="w9">D</i><i class="w9">R</i><i class="w7">4</i><i class="w7 u">_</i><i class="w7">2</i><i class="w7">1</i><i class="w7">3</i><i class="w7">3</i><i class="w4">(</i><i class="w7">1</i><i class="w7">6</i><i class="w4">-</i><i class="w7">1</i><i class="w7">6</i><i class="w4">-</i><i class="w7">1</i><i class="w7">6</i><i class="w4">)</i></div>
<div class="cell" style="left:263px;top:899px;width:167px;height:16px;"></div>
<div class="cell" style="left:432px;top:899px;width:214px;height:16px;"></div>
<div class="t" style="left:264px;top:900px"><i class="w9">D</i><i class="w9">D</i><i class="w9">R</i><i class="w7">4</i><i class="w7 u">_</i><i class="w7">2</i><i class="w7">4</i><i class="w7">0</i><i class="w7">0</i><i class="w8">P</i></div>
<div class="t" style="left:433px;top:900px"><i class="w9">D</i><i class="w9">D</i><i class="w9">R</i><i class="w7">4</i><i class="w7 u">_</i><i class="w7">2</i><i class="w7">4</i><i class="w7">0</i><i class="w7">0</i><i class="w4">(</i><i class="w7">1</i><i class="w7">4</i><i class="w4">-</i><i class="w7">1</i><i class="w7">4</i><i class="w4">-</i><i class="w7">1</i><i class="w7">4</i><i class="w4">)</i></div>
<div class="cell" style="left:263px;top:917px;width:167px;height:16px;"></div>
<div class="cell" style="left:432px;top:917px;width:214px;height:16px;"></div>
<div class="t" style="left:264px;top:918px"><i class="w9">D</i><i class="w9">D</i><i class="w9">R</i><i class="w7">4</i><i class="w7 u">_</i><i class="w7">2</i><i class="w7">4</i><i class="w7">0</i><i class="w7">0</i><i class="w9">R</i></div>
<div class="t" style="left:433px;top:918px"><i class="w9">D</i><i class="w9">D</i><i class="w9">R</i><i class="w7">4</i><i class="w7 u">_</i><i class="w7">2</i><i class="w7">4</i><i class="w7">0</i><i class="w7">0</i><i class="w4">(</i><i class="w7">1</i><i class="w7">6</i><i class="w4">-</i><i class="w7">1</i><i class="w7">6</i><i class="w4">-</i><i class="w7">1</i><i class="w7">6</i><i class="w4">)</i></div>
<div class="cell" style="left:263px;top:935px;width:167px;height:16px;"></div>
<div class="cell" style="left:432px;top:935px;width:214px;height:16px;"></div>
<div class="t" style="left:264px;top:936px"><i class="w9">D</i><i class="w9">D</i><i class="w9">R</i><i class="w7">4</i><i class="w7 u">_</i><i class="w7">2</i><i class="w7">4</i><i class="w7">0</i><i class="w7">0</i><i class="w7">T</i></div>
<div class="t" style="left:433px;top:936px"><i class="w9">D</i><i class="w9">D</i><i class="w9">R</i><i class="w7">4</i><i class="w7 u">_</i><i class="w7">2</i><i class="w7">4</i><i class="w7">0</i><i class="w7">0</i><i class="w4">(</i><i class="w7">1</i><i class="w7">7</i><i class="w4">-</i><i class="w7">1</i><i class="w7">7</i><i class="w4">-</i><i class="w7">1</i><i class="w7">7</i><i class="w4">)</i></div>
<div class="cell" style="left:263px;top:953px;width:167px;height:16px;"></div>
<div class="cell" style="left:432px;top:953px;width:214px;height:16px;"></div>
<div class="t" style="left:264px;top:954px"><i class="w9">D</i><i class="w9">D</i><i class="w9">R</i><i class="w7">4</i><i class="w7 u">_</i><i class="w7">2</i><i class="w7">4</i><i class="w7">0</i><i class="w7">0</i><i class="w9">U</i></div>
<div class="t" style="left:433px;top:954px"><i class="w9">D</i><i class="w9">D</i><i class="w9">R</i><i class="w7">4</i><i class="w7 u">_</i><i class="w7">2</i><i class="w7">4</i><i class="w7">0</i><i class="w7">0</i><i class="w4">(</i><i class="w7">1</i><i class="w7">8</i><i class="w4">-</i><i class="w7">1</i><i class="w7">8</i><i class="w4">-</i><i class="w7">1</i><i class="w7">8</i><i class="w4">)</i></div>
<div style="position:absolute;left:264px;top:755px;width:88px;height:15px;background:#ffe100;clip-path:polygon(0 0,100% 0,100% 13px,0 15px)"></div>
<div style="position:absolute;left:433px;top:755px;width:130px;height:15px;background:#ffe100"></div>
<div class="t" style="left:264px;top:756px"><i class="w9">D</i><i class="w9">D</i><i class="w9">R</i><i class="w7">4</i><i class="w7 u">_</i><i class="w7">1</i><i class="w7">6</i><i class="w7">0</i><i class="w7">0</i><i class="w8">K</i></div>
<div class="t" style="left:433px;top:756px"><i class="w9">D</i><i class="w9">D</i><i class="w9">R</i><i class="w7">4</i><i class="w7 u">_</i><i class="w7">1</i><i class="w7">6</i><i class="w7">0</i><i class="w7">0</i><i class="w4">(</i><i class="w7">1</i><i class="w7">1</i><i class="w4">-</i><i class="w7">1</i><i class="w7">1</i><i class="w4">-</i><i class="w7">1</i><i class="w7">1</i><i class="w4">)</i></div>
<div style="position:absolute;left:259px;top:750px;width:309px;height:25px;border:5px solid #ed1c24;box-sizing:border-box"></div>
</body></html>
